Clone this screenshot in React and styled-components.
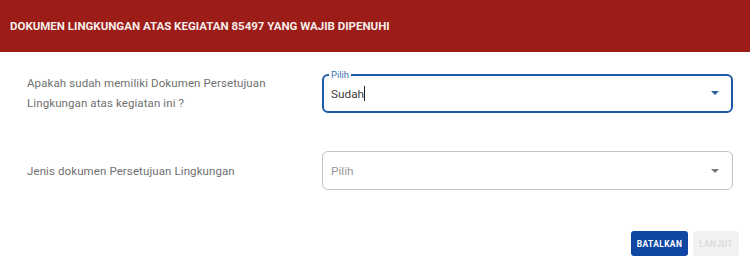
import React from "react";
import styled, { createGlobalStyle } from "styled-components";

const GlobalStyle = createGlobalStyle`
  html, body {
    margin: 0;
    padding: 0;
    background: #ffffff;
    font-family: Roboto, "Liberation Sans", Arial, sans-serif;
  }
`;

const Dialog = styled.div`
  width: 750px;
  height: 261px;
  background: #fff;
  display: flex;
  flex-direction: column;
`;

const Header = styled.div`
  height: 52px;
  background: #9c1d17;
  display: flex;
  align-items: center;
  padding: 0 10px;
  box-sizing: border-box;

  h2 {
    margin: 0;
    color: #f6ecea;
    font-size: 11.5px;
    font-weight: 700;
    letter-spacing: 0;
  }
`;

const Body = styled.div`
  padding: 21px 17px 0 27px;
  display: flex;
  flex-direction: column;
  gap: 38px;
`;

const Row = styled.div`
  display: grid;
  grid-template-columns: 295px 1fr;
  align-items: center;
`;

const Label = styled.div`
  color: #707070;
  font-size: 11.5px;
  line-height: 20px;
  letter-spacing: 0.1px;
`;

const Field = styled.div`
  position: relative;
  height: 39px;
  box-sizing: border-box;
  border: ${(p) => (p.$focused ? "2px solid #1f5aa6" : "1px solid #c2c2c2")};
  border-radius: 6px;
  display: flex;
  align-items: center;
  padding: 0 ${(p) => (p.$focused ? "12px" : "13px")} 0
    ${(p) => (p.$focused ? "7px" : "8px")};
  font-size: 11.8px;
`;

const FloatLabel = styled.span`
  position: absolute;
  top: -7px;
  left: 5px;
  padding: 0 2px;
  background: #fff;
  color: #3a72ba;
  font-size: 9.4px;
  line-height: 11px;
`;

const Value = styled.span`
  flex: 1;
  color: ${(p) => (p.$placeholder ? "#9a9a9a" : "#404040")};
  display: flex;
  align-items: center;
  margin-top: 1px;
`;

const Caret = styled.span`
  display: inline-block;
  width: 1px;
  height: 15px;
  background: #222;
`;

const Arrow = styled.span`
  width: 0;
  height: 0;
  border-left: 4px solid transparent;
  border-right: 4px solid transparent;
  border-top: 4px solid ${(p) => (p.$focused ? "#2a5f9e" : "#777")};
`;

const Footer = styled.div`
  margin-top: auto;
  padding: 0 11px 5px 0;
  display: flex;
  justify-content: flex-end;
  gap: 5px;
`;

const Button = styled.button`
  height: 25px;
  width: ${(p) => (p.$disabled ? "46px" : "57px")};
  padding: 0;
  border: none;
  border-radius: 3px;
  font-family: Roboto, "Liberation Sans", Arial, sans-serif;
  font-size: 8.4px;
  font-weight: 700;
  letter-spacing: 0.4px;
  background: ${(p) => (p.$disabled ? "#f2f2f2" : "#0e47a3")};
  color: ${(p) => (p.$disabled ? "#dcdcdc" : "#ffffff")};
  cursor: ${(p) => (p.$disabled ? "default" : "pointer")};
`;

export default function App() {
  return (
    <>
      <GlobalStyle />
      <Dialog>
        <Header>
          <h2>DOKUMEN LINGKUNGAN ATAS KEGIATAN 85497 YANG WAJIB DIPENUHI</h2>
        </Header>
        <Body>
          <Row>
            <Label>
              Apakah sudah memiliki Dokumen Persetujuan
              <br />
              Lingkungan atas kegiatan ini ?
            </Label>
            <Field $focused>
              <FloatLabel>Pilih</FloatLabel>
              <Value>
                Sudah
                <Caret />
              </Value>
              <Arrow $focused />
            </Field>
          </Row>
          <Row>
            <Label>Jenis dokumen Persetujuan Lingkungan</Label>
            <Field>
              <Value $placeholder>Pilih</Value>
              <Arrow />
            </Field>
          </Row>
        </Body>
        <Footer>
          <Button>BATALKAN</Button>
          <Button $disabled disabled>
            LANJUT
          </Button>
        </Footer>
      </Dialog>
    </>
  );
}
